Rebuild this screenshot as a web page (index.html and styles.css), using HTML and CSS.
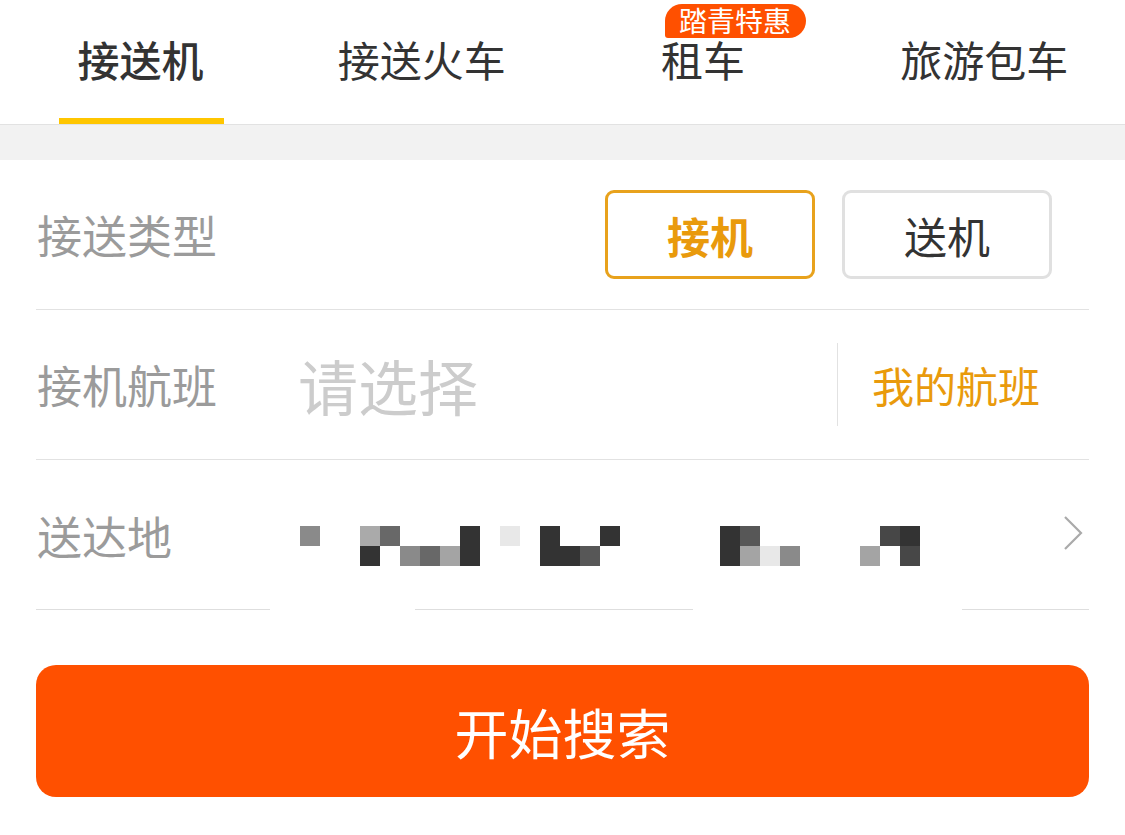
FILE: index.html
```html
<!DOCTYPE html>
<html lang="zh-CN">
<head>
<meta charset="utf-8">
<title>接送机</title>
<link rel="stylesheet" href="styles.css">
</head>
<body>
<nav class="tabs">
  <div class="tab active"><span class="tab-text">接送机</span><span class="underline"></span></div>
  <div class="tab"><span class="tab-text">接送火车</span></div>
  <div class="tab"><span class="tab-text">租车</span><span class="badge">踏青特惠</span></div>
  <div class="tab"><span class="tab-text">旅游包车</span></div>
</nav>
<div class="band"></div>
<main class="form">
  <div class="row">
    <div class="label">接送类型</div>
    <div class="choices">
      <div class="choice selected">接机</div>
      <div class="choice">送机</div>
    </div>
  </div>
  <div class="row">
    <div class="label">接机航班</div>
    <div class="placeholder">请选择</div>
    <div class="side-link">我的航班</div>
  </div>
  <div class="row row-last">
    <div class="label">送达地</div>
    <div class="mosaic">
      <i class="c5"></i><i></i><i></i><i class="c3"></i><i class="c6"></i><i></i><i></i><i></i><i class="c1"></i><i></i><i class="c8"></i><i></i><i class="c1"></i><i></i><i></i><i class="c1"></i><i></i><i></i><i></i><i></i><i></i><i class="c1"></i><i class="c4"></i><i></i><i></i><i></i><i></i><i></i><i></i><i class="c2"></i><i class="c1"></i>
      <i></i><i></i><i></i><i class="c1"></i><i></i><i class="c5"></i><i class="c6"></i><i class="c7"></i><i class="c1"></i><i></i><i></i><i></i><i class="c1"></i><i class="c1"></i><i class="c4"></i><i></i><i></i><i></i><i></i><i></i><i></i><i class="c1"></i><i class="c7"></i><i class="c8"></i><i class="c5"></i><i></i><i></i><i></i><i class="c7"></i><i></i><i class="c2"></i>
    </div>
    <svg class="chevron" width="20" height="34" viewBox="0 0 20 34"><path d="M2 1 L18 17 L2 33" fill="none" stroke="#aaaaaa" stroke-width="2.2"/></svg>
  </div>
  <button class="search">开始搜索</button>
</main>
</body>
</html>
```

FILE: styles.css
```css
* { box-sizing: border-box; }
html, body {
  margin: 0;
  padding: 0;
  background: #ffffff;
  font-family: "Noto Sans CJK SC", "Noto Sans", sans-serif;
}
.tabs {
  display: flex;
  height: 125px;
  border-bottom: 1px solid #e2e2e2;
}
.tab {
  flex: 1;
  position: relative;
  display: flex;
  align-items: center;
  justify-content: center;
  padding-bottom: 6px;
  font-size: 42px;
  color: #333333;
}
.tab-text {
  display: block;
  line-height: 42px;
  height: 42px;
}
.tab.active { font-weight: 500; }
.underline {
  position: absolute;
  left: 50%;
  bottom: 0;
  width: 165px;
  height: 6px;
  margin-left: -82px;
  background: #ffc600;
}
.badge {
  position: absolute;
  left: 102px;
  top: 4px;
  width: 141px;
  height: 34px;
  border-radius: 17px 17px 17px 3px;
  background: #ff5000;
  color: #ffffff;
  font-size: 28px;
  line-height: 32px;
  text-align: center;
}
.band {
  height: 35px;
  background: #f2f2f2;
}
.form {
  padding: 0 36px;
}
.row {
  display: flex;
  align-items: center;
  height: 150px;
  border-bottom: 1px solid #e2e2e2;
}
.row-last {
  border-bottom: none;
  background: linear-gradient(to right, #dedede 0 234px, transparent 234px 379px, #dedede 379px 657px, transparent 657px 926px, #dedede 926px) left bottom / 100% 1px no-repeat;
}
.label {
  width: 264px;
  padding-left: 1px;
  font-size: 45px;
  color: #9b9b9b;
  flex-shrink: 0;
}
.choices {
  margin-left: auto;
  display: flex;
  gap: 27px;
  padding-right: 37px;
}
.choice {
  width: 210px;
  height: 89px;
  border: 3px solid #e0e0e0;
  border-radius: 9px;
  display: flex;
  align-items: center;
  justify-content: center;
  font-size: 43px;
  color: #333333;
}
.choice.selected {
  border-color: #e8a21c;
  color: #e99a0c;
  font-weight: 700;
}
.placeholder {
  flex: 1;
  font-size: 60px;
  color: #cccccc;
  margin-left: -2px;
}
.side-link {
  height: 83px;
  border-left: 1px solid #e2e2e2;
  padding: 0 49px 0 34px;
  display: flex;
  align-items: center;
  font-size: 42px;
  color: #e99a0c;
}
.mosaic {
  display: grid;
  grid-template-columns: repeat(31, 20px);
  grid-template-rows: repeat(2, 20px);
  margin-top: 22px;
}
.mosaic i { display: block; }
.c1 { background: #333333; }
.c2 { background: #474747; }
.c3 { background: #aaaaaa; }
.c4 { background: #575757; }
.c5 { background: #8a8a8a; }
.c6 { background: #686868; }
.c7 { background: #a4a4a4; }
.c8 { background: #e8e8e8; }
.chevron {
  margin-left: auto;
  margin-right: 6px;
  margin-top: -4px;
}
.search {
  display: block;
  width: 100%;
  height: 132px;
  margin-top: 55px;
  border: none;
  border-radius: 20px;
  background: #ff5000;
  color: #ffffff;
  font-family: "Noto Sans CJK SC", "Noto Sans", sans-serif;
  font-size: 54px;
  font-weight: 400;
}
```
